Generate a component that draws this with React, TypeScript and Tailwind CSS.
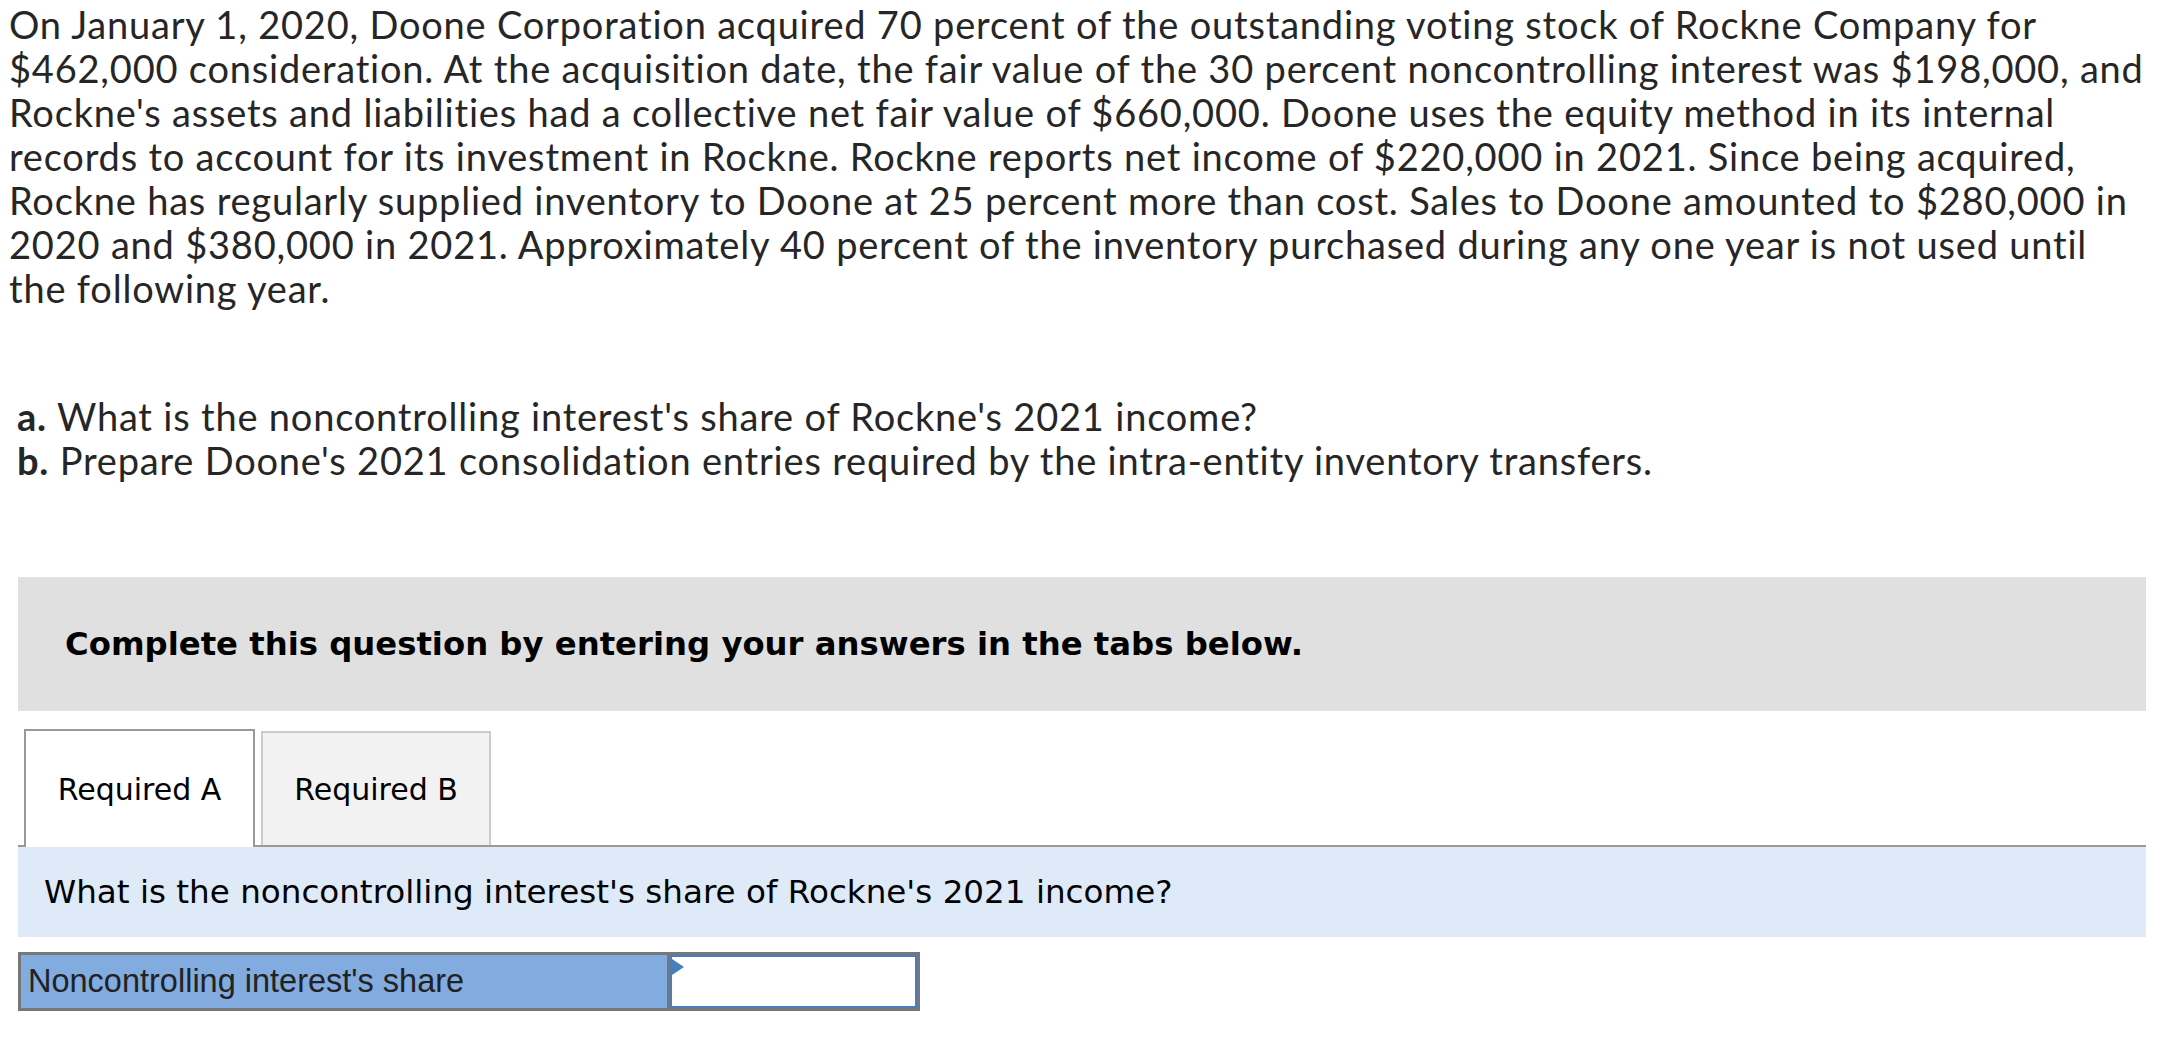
import React from 'react';

export default function App() {
  return (
    <div className="min-h-screen bg-white pt-[2px] pl-[9px] pr-[10px]">
      <p className="text-[38px] leading-[44px] tracking-[0.8px] text-[#262626] font-['Lato','Open_Sans',sans-serif]">
        On January 1, 2020, Doone Corporation acquired 70 percent of the outstanding voting stock of Rockne Company for
        <br />
        $462,000 consideration. At the acquisition date, the fair value of the 30 percent noncontrolling interest was $198,000, and
        <br />
        Rockne's assets and liabilities had a collective net fair value of $660,000. Doone uses the equity method in its internal
        <br />
        records to account for its investment in Rockne. Rockne reports net income of $220,000 in 2021. Since being acquired,
        <br />
        Rockne has regularly supplied inventory to Doone at 25 percent more than cost. Sales to Doone amounted to $280,000 in
        <br />
        2020 and $380,000 in 2021. Approximately 40 percent of the inventory purchased during any one year is not used until
        <br />
        the following year.
      </p>

      <div className="mt-[84px] pl-[8px] text-[38px] leading-[44px] tracking-[0.8px] text-[#262626] font-['Lato',sans-serif]">
        <p>
          <b>a.</b> What is the noncontrolling interest's share of Rockne's 2021 income?
        </p>
        <p>
          <b>b.</b> Prepare Doone's 2021 consolidation entries required by the intra-entity inventory transfers.
        </p>
      </div>

      <div className="ml-[9px] mr-[25px] font-['DejaVu_Sans','Verdana',sans-serif]">
        <div className="mt-[95px] h-[134px] bg-[#e0e0e0] flex items-center pl-[47px]">
          <span className="text-[32.3px] font-bold text-black">
            Complete this question by entering your answers in the tabs below.
          </span>
        </div>

        <div className="mt-[18px] flex items-end gap-[6px] pl-[6px] border-b-2 border-[#999999]">
          <div className="w-[231px] h-[118px] -mb-[2px] bg-white border-2 border-b-0 border-[#999999] flex items-center justify-center text-[30px] text-black">
            Required A
          </div>
          <div className="w-[230px] h-[114px] bg-[#f2f2f2] border-2 border-b-0 border-[#cccccc] flex items-center justify-center text-[30px] text-black">
            Required B
          </div>
        </div>

        <div className="h-[90px] bg-[#deeaf7] flex items-center pl-[26px] text-[32.6px] text-black">
          What is the noncontrolling interest's share of Rockne's 2021 income?
        </div>

        <div className="mt-[15px] w-[902px] h-[59px] flex border-[3px] border-[#777777]">
          <div className="w-[649px] bg-[#82abdf] border-r-[3px] border-[#777777] flex items-center pl-[7px] text-[32.5px] text-[#222222] font-['Liberation_Sans','Arial',sans-serif]">
            Noncontrolling interest's share
          </div>
          <div className="relative flex-1 bg-white border-2 border-[#4a7ebb]">
            <svg className="absolute left-0 top-[2px]" width="13" height="16" viewBox="0 0 13 16">
              <path d="M0 0 L12 8 L0 16 Z" fill="#4a7ebb" />
            </svg>
          </div>
        </div>
      </div>
    </div>
  );
}
